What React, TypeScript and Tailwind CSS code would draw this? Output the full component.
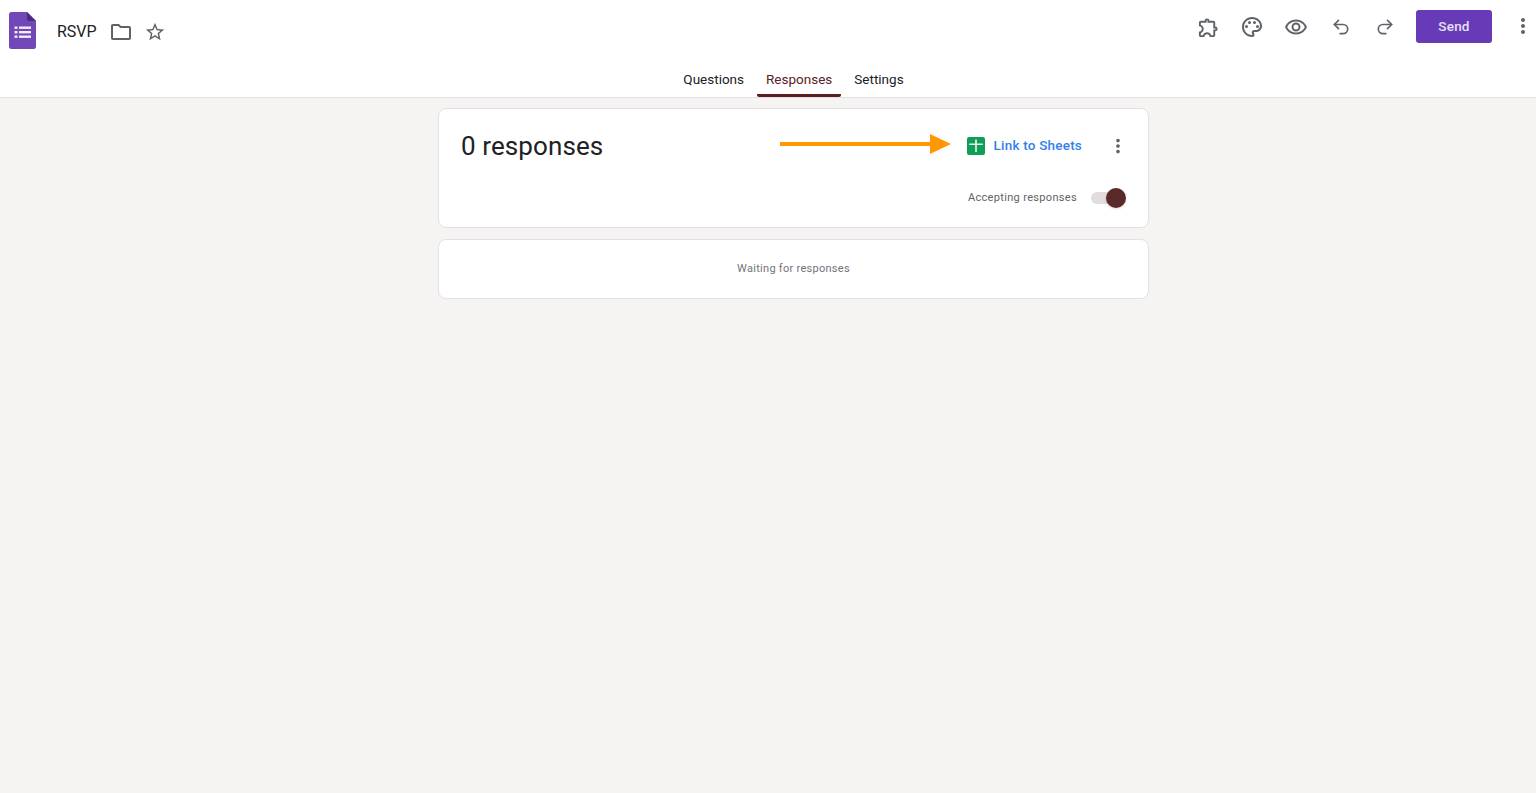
import { Redo2, Undo2 } from "lucide-react";
import {
  MdMoreVert,
  MdOutlineExtension,
  MdOutlineFolder,
  MdOutlinePalette,
  MdOutlineRemoveRedEye,
  MdStarBorder,
} from "react-icons/md";

const font = { fontFamily: "Roboto, sans-serif" };

function FormsLogo() {
  return (
    <svg width="27" height="37" viewBox="0 0 27 37">
      <path d="M2.500 0H18l9 9v25.500a2.500 2.500 0 0 1-2.500 2.500h-22A2.500 2.500 0 0 1 0 34.500v-32A2.500 2.500 0 0 1 2.500 0z" fill="#7248b9" />
      <path d="M18 0l9 9h-6.500A2.500 2.500 0 0 1 18 6.500z" fill="#4a2a85" />
      <g fill="#fff" fillOpacity="0.9">
        <rect x="5.500" y="14.500" width="3" height="2.400" />
        <rect x="5.500" y="19" width="3" height="2.400" />
        <rect x="5.500" y="23.500" width="3" height="2.400" />
        <rect x="10" y="14.500" width="12" height="2.400" />
        <rect x="10" y="19" width="12" height="2.400" />
        <rect x="10" y="23.500" width="12" height="2.400" />
      </g>
    </svg>
  );
}

function Header() {
  return (
    <header className="bg-white border-b border-[#e3e1e4] h-[98px] flex flex-col">
      <div className="h-[62px] flex items-center">
        <div className="ml-[9px] mb-[1px]">
          <FormsLogo />
        </div>
        <span className="ml-[21px] mt-[1px] text-[16px] text-[#202124]">RSVP</span>
        <MdOutlineFolder size={24} className="ml-[12px] mt-[1px] text-[#5f6368]" />
        <MdStarBorder size={22} className="ml-[11px] mt-[1px] text-[#5f6368]" />

        <div className="ml-auto mb-[10px] flex items-center">
          <div className="flex items-center text-[#5f6368] mt-[2px]">
            <MdOutlineExtension size={23} />
            <MdOutlinePalette size={24} className="ml-[20px]" />
            <MdOutlineRemoveRedEye size={24} className="ml-[20px]" />
            <Undo2 size={20} strokeWidth={2} className="ml-[23px]" />
            <Redo2 size={20} strokeWidth={2} className="ml-[24px]" />
          </div>
          <button className="ml-[21px] w-[76px] h-[33px] rounded-[3px] bg-[#673ab7] text-white/85 text-[13.500px] font-medium tracking-[0.2px]">
            Send
          </button>
          <MdMoreVert size={24} className="ml-[19px] mr-[1px] text-[#5f6368]" />
        </div>
      </div>
      <nav className="flex justify-center text-[13.500px] text-[#202124] ml-[51px]">
        <a className="h-[35px] pt-[7px] px-[9px] border-b-[3px] border-transparent">Questions</a>
        <a className="h-[35px] pt-[7px] px-[9px] mx-[4px] border-b-[3px] border-[#5a1f1f] rounded-b-[2px] text-[#5a2323]">Responses</a>
        <a className="h-[35px] pt-[7px] px-[9px] border-b-[3px] border-transparent">Settings</a>
      </nav>
    </header>
  );
}

function SummaryCard() {
  return (
    <section className="h-[120px] bg-white border border-[#e3e1e4] rounded-[8px] pl-[22px] pr-[22px] flex flex-col">
      <div className="flex items-center mt-[15px] h-[43px]">
        <h1 className="text-[26px] text-[#202124] tracking-[0.1px] mt-[2px]">0 responses</h1>
        <svg width="171" height="20" viewBox="0 0 171 20" className="ml-auto mb-[3px]">
          <rect x="0" y="8" width="152" height="4" fill="#ff9800" />
          <path d="M150 0l21 10-21 10z" fill="#ff9800" />
        </svg>
        <svg width="18" height="18" viewBox="0 0 18 18" className="ml-[16px]">
          <rect width="18" height="18" rx="2" fill="#0f9d58" />
          <path d="M8.200 2.500h1.600v4h6v1.500h-6v7H8.200V8h-6V6.500h6z" fill="#fff" fillOpacity="0.9" />
        </svg>
        <span className="ml-[9px] text-[13.500px] font-medium text-[#1a73e8] tracking-[0.2px] opacity-90">Link to Sheets</span>
        <MdMoreVert size={22} className="ml-[25px] -mr-[3px] text-[#5f6368]" />
      </div>
      <div className="flex items-center justify-end mt-[21px]">
        <span className="text-[11px] text-[#5f6368] tracking-[0.33px]">Accepting responses</span>
        <div className="relative ml-[14px] w-[35px] h-[20px] flex items-center">
          <div className="w-[30px] h-[12px] rounded-full bg-[#e2dcdc]" />
          <div className="absolute right-0 top-0 w-[20px] h-[20px] rounded-full bg-[#5a2a2a] shadow-sm" />
        </div>
      </div>
    </section>
  );
}

export default function App() {
  return (
    <div className="min-h-[793px] bg-[#f5f4f3]" style={font}>
      <Header />
      <main className="w-[711px] ml-[438px] pt-[10px] flex flex-col gap-[11px]">
        <SummaryCard />
        <section className="h-[60px] bg-white border border-[#e3e1e4] rounded-[8px] flex items-center justify-center">
          <span className="text-[11px] text-[#70757a] tracking-[0.28px]">Waiting for responses</span>
        </section>
      </main>
    </div>
  );
}
